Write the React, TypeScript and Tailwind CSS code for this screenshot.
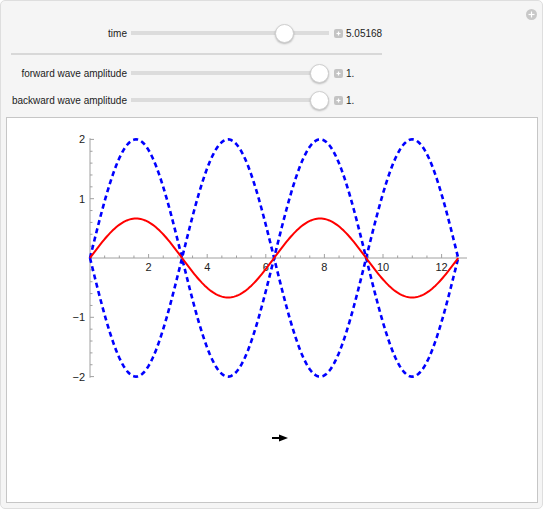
import React from "react";

const T = 5.05168;
const X0 = 83;
const Y0 = 140;
const SX = 29.3;
const SY = 59.3;

const px = (x: number) => X0 + x * SX;
const py = (y: number) => Y0 - y * SY;

function curve(f: (x: number) => number) {
  const pts: string[] = [];
  const n = 240;
  for (let i = 0; i <= n; i++) {
    const x = (4 * Math.PI * i) / n;
    pts.push(`${i === 0 ? "M" : "L"}${px(x).toFixed(2)},${py(f(x)).toFixed(2)}`);
  }
  return pts.join(" ");
}

function PlusIcon({ size, round }: { size: number; round?: boolean }) {
  const c = size / 2;
  return (
    <svg width={size} height={size} className="block">
      {round ? (
        <circle cx={c} cy={c} r={c} fill="#c8c8c8" />
      ) : (
        <rect width={size} height={size} rx="2" fill="#c4c4c4" />
      )}
      <line x1={2.5} y1={c} x2={size - 2.5} y2={c} stroke="#fff" strokeWidth="1.2" />
      <line x1={c} y1={2.5} x2={c} y2={size - 2.5} stroke="#fff" strokeWidth="1.2" />
    </svg>
  );
}

function Slider({ frac }: { frac: number }) {
  return (
    <div className="flex h-[22px] w-[198px] items-center bg-[linear-gradient(#dcdcdc,#dcdcdc)] bg-[length:100%_4px] bg-center bg-no-repeat">
      <div
        className="h-[19px] w-[19px] rounded-full border border-[#d0d0d0] bg-white shadow-[0_1px_2px_rgba(0,0,0,0.25)]"
        style={{ marginLeft: `${frac * 179}px` }}
      />
    </div>
  );
}

function Row({ label, frac, value }: { label: string; frac: number; value: string }) {
  return (
    <div className="flex h-[22px] items-center">
      <div className="flex w-[127px] justify-end whitespace-nowrap pr-[4px]">{label}</div>
      <Slider frac={frac} />
      <div className="ml-[5px]">
        <PlusIcon size={9} />
      </div>
      <div className="ml-[3px]">{value}</div>
    </div>
  );
}

function Plot() {
  const xTicks: number[] = [];
  for (let v = 0.5; v <= 12.5; v += 0.5) xTicks.push(v);
  const yTicks: number[] = [];
  for (let v = -2; v <= 2.001; v += 0.2) yTicks.push(Math.round(v * 10) / 10);
  const amp = 2 * Math.cos(T);

  return (
    <svg width="530" height="384" className="block">
      {/* axes */}
      <line x1={X0} y1={Y0} x2={460} y2={Y0} stroke="#a0a0a0" strokeWidth="1" />
      <line x1={X0} y1={py(2.02)} x2={X0} y2={py(-2.02)} stroke="#a0a0a0" strokeWidth="1" />
      {xTicks.map((v) => {
        const major = Math.abs(v % 2) < 0.001;
        return (
          <line
            key={"x" + v}
            x1={px(v)}
            y1={Y0}
            x2={px(v)}
            y2={Y0 - (major ? 4 : 2.5)}
            stroke="#a0a0a0"
            strokeWidth="1"
          />
        );
      })}
      {yTicks.map((v) => {
        if (v === 0) return null;
        const major = Math.abs(v - Math.round(v)) < 0.001;
        return (
          <line
            key={"y" + v}
            x1={X0}
            y1={py(v)}
            x2={X0 + (major ? 4 : 2.5)}
            y2={py(v)}
            stroke="#a0a0a0"
            strokeWidth="1"
          />
        );
      })}
      {[2, 4, 6, 8, 10, 12].map((v) => (
        <text
          key={"xl" + v}
          x={px(v)}
          y={Y0 + 13}
          textAnchor="middle"
          fontSize="11"
          fontFamily="'Liberation Sans', Arial, sans-serif"
          fill="#222"
        >
          {v}
        </text>
      ))}
      {[2, 1, -1, -2].map((v) => (
        <text
          key={"yl" + v}
          x={X0 - 5}
          y={py(v) + 4}
          textAnchor="end"
          fontSize="11"
          fontFamily="'Liberation Sans', Arial, sans-serif"
          fill="#222"
        >
          {v < 0 ? `\u2212${-v}` : v}
        </text>
      ))}
      {/* envelopes */}
      <path d={curve((x) => 2 * Math.sin(x))} fill="none" stroke="#0000ff" strokeWidth="2.6" strokeDasharray="5 3.5" />
      <path d={curve((x) => -2 * Math.sin(x))} fill="none" stroke="#0000ff" strokeWidth="2.6" strokeDasharray="5 3.5" />
      {/* standing wave */}
      <path d={curve((x) => amp * Math.sin(x))} fill="none" stroke="#ff0000" strokeWidth="2" />
      {/* arrow */}
      <line x1={265} y1={320} x2={274} y2={320} stroke="#000" strokeWidth="2" />
      <polygon points="272,316.5 281,320 272,323.5" fill="#000" />
    </svg>
  );
}

export default function App() {
  return (
    <div className="h-[510px] w-[544px] bg-white font-['Liberation_Sans',Arial,sans-serif] text-[10px] text-[#222]">
      <div className="relative flex h-[509px] w-[543px] flex-col rounded-[5px] border border-[#dedede] bg-[#f5f5f5]">
        <div className="absolute right-[5px] top-[8px]">
          <PlusIcon size={11} round />
        </div>
        <div className="pl-[3px] pt-[21px]">
          <Row label="time" frac={T / (2 * Math.PI)} value="5.05168" />
        </div>
        <div className="ml-[10px] mt-[9px] h-[2px] w-[371px] bg-[#d8d8d8]" />
        <div className="flex flex-col gap-[5px] pl-[3px] pt-[7px]">
          <Row label="forward wave amplitude" frac={1} value="1." />
          <Row label="backward wave amplitude" frac={1} value="1." />
        </div>
        <div className="ml-[5px] mt-[6px] h-[386px] w-[532px] border border-[#c6c6c6] bg-white">
          <Plot />
        </div>
      </div>
    </div>
  );
}
